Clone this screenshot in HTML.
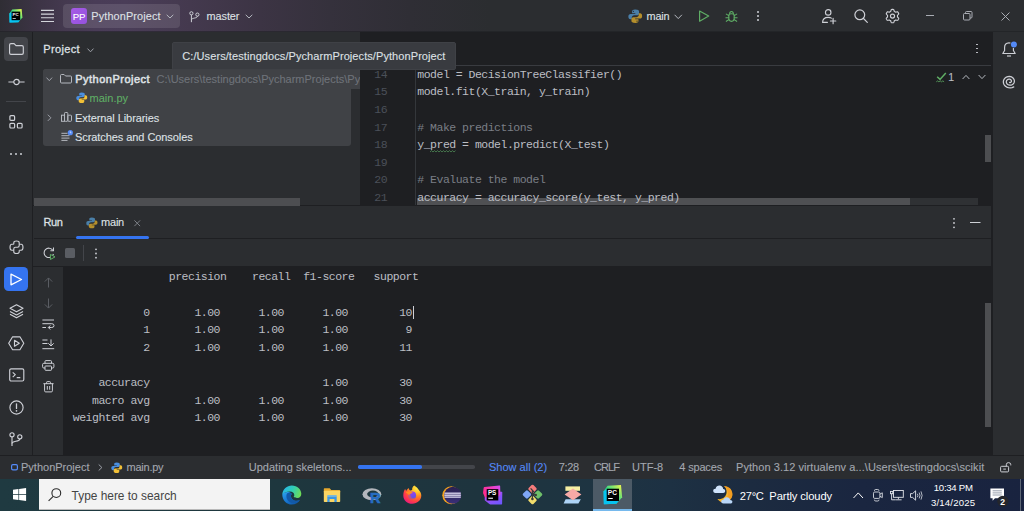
<!DOCTYPE html>
<html lang="en">
<head>
<meta charset="utf-8">
<title>PythonProject - main.py</title>
<style>
*{box-sizing:border-box;margin:0;padding:0}
html,body{width:1024px;height:511px;overflow:hidden;background:#1e1f22}
body{position:relative;font-family:"Liberation Sans",sans-serif;font-size:11px;color:#dfe1e5;-webkit-font-smoothing:antialiased}
.abs{position:absolute}
.t{position:absolute;white-space:pre;line-height:14px;height:14px;-webkit-text-stroke:.1px}
.mono{font-family:"Liberation Mono",monospace;font-size:11.5px;letter-spacing:-.501px;white-space:pre;position:absolute;line-height:14px;height:14px;color:#bcbec4}
svg{position:absolute;overflow:visible}
.med{-webkit-text-stroke:.27px currentColor}
.k{-webkit-text-stroke:0}
.ln{color:#4b5059}
.cm{color:#7a7e85}
/* regions */
#titlebar{left:0;top:0;width:1024px;height:32px;background:#2b2d30}
#titleglow{left:0;top:0;width:520px;height:31.5px;background:linear-gradient(90deg,#2f2d34 0px,#36313d 20px,#3d3446 40px,#44394f 64px,#493c57 95px,#4a3d58 125px,#44394e 190px,#3c3444 260px,#35313c 330px,#2f2e35 410px,#2b2d30 490px)}
#lstripe{left:0;top:32px;width:32.300px;height:424px;background:#2b2d30}
#lstripeb{left:32.300px;top:32px;width:.9px;height:424px;background:#1e1f22}
#rstripe{left:992.300px;top:32px;width:32px;height:424px;background:#2b2d30}
#rstripeb{left:991.500px;top:32px;width:.8px;height:424px;background:#1e1f22}
#proj{left:33.200px;top:32px;width:326.800px;height:173px;background:#2b2d30}
#editor{left:360px;top:32px;width:631.500px;height:173.200px;background:#1e1f22}
#runhdr{left:33.200px;top:205.500px;width:958.300px;height:34px;background:#2b2d30}
#runtool{left:33.200px;top:240px;width:958.300px;height:26px;background:#2b2d30}
#rungut{left:33.200px;top:266.500px;width:29.600px;height:189px;background:#2b2d30}
#console{left:62.800px;top:266.500px;width:928.700px;height:189px;background:#1e1f22}
#status{left:0;top:456px;width:1024px;height:23px;background:#2b2d30}
#taskbar{left:0;top:479px;width:1024px;height:32px;background:#1c2a36}
</style>
</head>
<body>
<!-- ===== base regions ===== -->
<div class="abs" id="titlebar"></div>
<div class="abs" id="titleglow"></div>
<div class="abs" id="lstripe"></div><div class="abs" id="lstripeb"></div>
<div class="abs" id="rstripe"></div><div class="abs" id="rstripeb"></div>
<div class="abs" id="proj"></div>
<div class="abs" id="editor"></div>
<div class="abs" id="runhdr"></div>
<div class="abs" id="runtool"></div>
<div class="abs" id="rungut"></div>
<div class="abs" id="console"></div>
<div class="abs" id="status"></div>
<div class="abs" id="taskbar"></div>
<!-- SECTION:TITLEBAR -->
<!-- ===== title bar ===== -->
<div class="abs" style="left:0;top:31px;width:1024px;height:1px;background:#1e1f22;opacity:.55"></div>
<!-- PyCharm logo -->
<svg style="left:9px;top:9px" width="14" height="14" viewBox="0 0 14 14">
  <defs><linearGradient id="pcg" x1="0" y1="1" x2="1" y2="0"><stop offset="0" stop-color="#07c3f2"/><stop offset=".45" stop-color="#21d789"/><stop offset="1" stop-color="#fcf84a"/></linearGradient></defs>
  <path d="M3.2 0.6 L12.6 0 L13.4 8.6 L9.4 13.2 L0.6 13.4 L0.4 4.4 Z" fill="url(#pcg)"/>
  <path d="M0.4 4.6 L0.6 13.4 L9.4 13.2 L11 11 L2.6 11 L2.6 3 Z" fill="#07c3f2"/>
  <rect x="2.6" y="2.6" width="8.6" height="8.6" fill="#000"/>
  <text x="3.5" y="6.9" font-family="Liberation Sans,sans-serif" font-weight="700" font-size="4.4" fill="#fff">PC</text>
  <rect x="3.6" y="9.1" width="3.2" height=".7" fill="#fff"/>
</svg>
<!-- hamburger -->
<svg style="left:41px;top:9px" width="13" height="14" viewBox="0 0 13 14"><path d="M0 1.350 H13 M0 5.050 H13 M0 8.750 H13 M0 12.450 H13" stroke="#d3d5db" stroke-width="1.150" fill="none"/></svg>
<!-- project chip -->
<div class="abs" style="left:62.5px;top:4px;width:117.5px;height:24px;border-radius:4px;background:rgba(255,255,255,.11)"></div>
<div class="abs" style="left:70.5px;top:8px;width:16.5px;height:16px;border-radius:3px;background:linear-gradient(135deg,#a65be6,#9552dd)"></div>
<div class="t" id="pp" style="left:72.700px;top:9.800px;font-size:9.6px;color:#fff;letter-spacing:-.2px">PP</div>
<div class="t" id="tproj" style="margin-top:-.5px;left:91.3px;top:9.5px;font-size:10.9px;color:#dfe1e5;letter-spacing:.12px">PythonProject</div>
<svg style="left:166px;top:13.5px" width="8" height="5" viewBox="0 0 8 5"><path d="M.7.8 L4 4 L7.3.8" fill="none" stroke="#b4b8bf" stroke-width="1"/></svg>
<!-- branch -->
<svg style="left:189px;top:10.5px" width="11" height="12" viewBox="0 0 11 12"><g fill="none" stroke="#ced0d6" stroke-width="1"><circle cx="2.4" cy="2.3" r="1.6"/><circle cx="8.4" cy="3.6" r="1.6"/><path d="M2.4 3.9 V11.2"/><path d="M8.4 5.2 C8.4 7.6 2.4 6.6 2.4 9"/></g></svg>
<div class="t" id="tmaster" style="margin-top:-.5px;left:206.6px;top:9.5px;font-size:10.9px;color:#dfe1e5;letter-spacing:-.08px">master</div>
<svg style="left:244.5px;top:13.5px" width="8" height="5" viewBox="0 0 8 5"><path d="M.7.8 L4 4 L7.3.8" fill="none" stroke="#b4b8bf" stroke-width="1"/></svg>
<!-- run config -->
<svg style="left:627.5px;top:8.8px" width="14.5" height="14.5" viewBox="0 0 16 16">
  <path d="M7.9 0.6c-3 0-3.4 1.3-3.4 2.2v1.9h3.6v.7H2.9C1.4 5.4.4 6.4.4 8.4s.9 3 2.2 3h1.6V9.500c0-1.400 1.200-2.500 2.600-2.500h3.400c1.100 0 2-.9 2-2V2.800c0-1.100-1-2.200-4.300-2.200z" fill="#4a7fa8"/>
  <path d="M8.100 15.400c3 0 3.400-1.300 3.400-2.200v-1.900H7.900v-.7h5.200c1.500 0 2.500-1 2.500-3s-.9-3-2.200-3h-1.600v1.900c0 1.400-1.200 2.500-2.600 2.500H5.800c-1.100 0-2 .9-2 2v2.200c0 1.100 1 2.200 4.300 2.200z" fill="#b58f2c"/>
  <circle cx="6" cy="2.500" r=".7" fill="#2b2d30"/><circle cx="10" cy="13.500" r=".7" fill="#2b2d30"/>
</svg>
<div class="t" id="tmain" style="margin-top:-.5px;left:646.6px;top:9.5px;font-size:10.9px;color:#dfe1e5;letter-spacing:-.25px">main</div>
<svg style="left:673.5px;top:14px" width="8.500" height="6" viewBox="0 0 8.500 6"><path d="M.6.8 L4.250 4.600 L7.900.8" fill="none" stroke="#b4b8bf" stroke-width="1"/></svg>
<svg style="left:698px;top:10px" width="12" height="12" viewBox="0 0 12 12"><path d="M1.600 1 L10.700 6.100 L1.600 11.200 Z" fill="none" stroke="#5fad65" stroke-width="1.200" stroke-linejoin="round"/></svg>
<svg style="left:724.5px;top:9.5px" width="13" height="13" viewBox="0 0 13 13"><g fill="none" stroke="#5fad65" stroke-width="1.100" stroke-linecap="round"><path d="M3.800 5.200 C3.800 3.200 9.200 3.200 9.200 5.200 V8.600 C9.200 12.300 3.800 12.300 3.800 8.600 Z"/><path d="M4.700 3.600 C4.700 .7 8.300 .7 8.300 3.600"/><path d="M3.800 5.600 L1.300 4.100 M3.800 7.700 H.9 M3.800 9.600 L1.300 11.300 M9.200 5.600 L11.700 4.100 M9.200 7.700 H12.100 M9.200 9.600 L11.700 11.300"/></g></svg>
<div class="abs" style="left:757.300px;top:10.5px;width:2.200px;height:2.200px;border-radius:1.100px;background:#ced0d6"></div>
<div class="abs" style="left:757.300px;top:14.9px;width:2.200px;height:2.200px;border-radius:1.100px;background:#ced0d6"></div>
<div class="abs" style="left:757.300px;top:19.3px;width:2.200px;height:2.200px;border-radius:1.100px;background:#ced0d6"></div>
<!-- right icons -->
<svg style="left:821px;top:8.500px" width="16" height="15" viewBox="0 0 16 15"><g fill="none" stroke="#ced0d6" stroke-width="1.150" stroke-linecap="round"><circle cx="7.200" cy="3.400" r="2.750"/><path d="M1.600 13.400 C1.600 10 4 8.300 7.200 8.300 C8.600 8.300 9.700 8.600 10.400 9.100 M1.600 13.400 H6.400"/><path d="M12.100 9.300 V14.700 M9.400 12 H14.800"/></g></svg>
<svg style="left:853.5px;top:9.300px" width="14" height="14" viewBox="0 0 14 14"><g fill="none" stroke="#ced0d6" stroke-width="1.200" stroke-linecap="round"><circle cx="5.800" cy="5.800" r="4.900"/><path d="M9.500 9.500 L13.300 13.300"/></g></svg>
<svg style="left:884.700px;top:9px" width="15" height="14" viewBox="0 0 15 14"><g fill="none" stroke="#ced0d6" stroke-width="1.150" stroke-linejoin="round"><path d="M12.50 7.10 L12.50 7.32 L12.48 7.54 L12.46 7.75 L12.55 7.99 L12.85 8.29 L13.15 8.61 L13.44 8.97 L13.68 9.35 L13.69 9.66 L13.57 9.93 L13.44 10.19 L13.30 10.45 L13.15 10.70 L12.99 10.94 L12.82 11.18 L12.53 11.32 L12.09 11.30 L11.64 11.24 L11.20 11.14 L10.80 11.03 L10.54 11.07 L10.37 11.20 L10.19 11.32 L10.00 11.43 L9.81 11.54 L9.61 11.63 L9.41 11.72 L9.25 11.92 L9.15 12.32 L9.01 12.75 L8.85 13.18 L8.64 13.57 L8.37 13.74 L8.08 13.77 L7.79 13.79 L7.50 13.80 L7.21 13.79 L6.92 13.77 L6.63 13.74 L6.36 13.57 L6.15 13.18 L5.99 12.75 L5.85 12.32 L5.75 11.92 L5.59 11.72 L5.39 11.63 L5.19 11.54 L5.00 11.43 L4.81 11.32 L4.63 11.20 L4.46 11.07 L4.20 11.03 L3.80 11.14 L3.36 11.24 L2.91 11.30 L2.47 11.32 L2.18 11.18 L2.01 10.94 L1.85 10.70 L1.70 10.45 L1.56 10.19 L1.43 9.93 L1.31 9.66 L1.32 9.35 L1.56 8.97 L1.85 8.61 L2.15 8.29 L2.45 7.99 L2.54 7.75 L2.52 7.54 L2.50 7.32 L2.50 7.10 L2.50 6.88 L2.52 6.66 L2.54 6.45 L2.45 6.21 L2.15 5.91 L1.85 5.59 L1.56 5.23 L1.32 4.85 L1.31 4.54 L1.43 4.27 L1.56 4.01 L1.70 3.75 L1.85 3.50 L2.01 3.26 L2.18 3.02 L2.47 2.88 L2.91 2.90 L3.36 2.96 L3.80 3.06 L4.20 3.17 L4.46 3.13 L4.63 3.00 L4.81 2.88 L5.00 2.77 L5.19 2.66 L5.39 2.57 L5.59 2.48 L5.75 2.28 L5.85 1.88 L5.99 1.45 L6.15 1.02 L6.36 0.63 L6.63 0.46 L6.92 0.43 L7.21 0.41 L7.50 0.40 L7.79 0.41 L8.08 0.43 L8.37 0.46 L8.64 0.63 L8.85 1.02 L9.01 1.45 L9.15 1.88 L9.25 2.28 L9.41 2.48 L9.61 2.57 L9.81 2.66 L10.00 2.77 L10.19 2.88 L10.37 3.00 L10.54 3.13 L10.80 3.17 L11.20 3.06 L11.64 2.96 L12.09 2.90 L12.53 2.88 L12.82 3.02 L12.99 3.26 L13.15 3.50 L13.30 3.75 L13.44 4.01 L13.57 4.27 L13.69 4.54 L13.68 4.85 L13.44 5.23 L13.15 5.59 L12.85 5.91 L12.55 6.21 L12.46 6.45 L12.48 6.66 L12.50 6.88 Z"/><circle cx="7.500" cy="7.100" r="2.050"/></g></svg>
<div class="abs" style="left:925.5px;top:14.800px;width:8.500px;height:1px;background:#a9acb3"></div>
<svg style="left:962.5px;top:11px" width="10" height="10" viewBox="0 0 10 10"><g fill="none" stroke="#a9acb3" stroke-width="1"><rect x=".5" y="2.500" width="6.500" height="6.500" rx="1"/><path d="M2.500 2.500 V1.500 Q2.500 .5 3.500 .5 H8 Q9 .5 9 1.500 V6 Q9 7 8 7 H7"/></g></svg>
<svg style="left:1000.5px;top:11.500px" width="9" height="9" viewBox="0 0 9 9"><path d="M.5.5 L8.500 8.500 M8.500.5 L.5 8.500" fill="none" stroke="#a9acb3" stroke-width="1"/></svg>
<!-- END:TITLEBAR -->
<!-- SECTION:LEFTSTRIPE -->
<!-- ===== left tool stripe ===== -->
<div class="abs" style="left:4px;top:37px;width:24px;height:24px;border-radius:4px;background:#43454a"></div>
<svg style="left:8.600px;top:43.100px" width="14.900" height="12" viewBox="0 0 15.500 12.500"><path d="M.6 2 Q.6 .6 2 .6 H5.300 L7.300 2.700 H13.500 Q14.900 2.700 14.900 4.100 V10.500 Q14.900 11.900 13.500 11.900 H2 Q.6 11.900 .6 10.500 Z" fill="none" stroke="#ced0d6" stroke-width="1.200" stroke-linejoin="round"/></svg>
<svg style="left:7.500px;top:78px" width="17" height="8" viewBox="0 0 17 8"><g fill="none" stroke="#ced0d6" stroke-width="1.200"><circle cx="8.500" cy="4" r="2.700"/><path d="M.4 4 H5.800 M11.200 4 H16.600"/></g></svg>
<div class="abs" style="left:6px;top:101px;width:20px;height:1px;background:#43454a"></div>
<svg style="left:9px;top:115px" width="14" height="14" viewBox="0 0 14 14"><g fill="none" stroke="#ced0d6" stroke-width="1.200"><rect x=".9" y=".7" width="4.700" height="4.700" rx="1"/><rect x=".9" y="8.300" width="4.700" height="4.700" rx="1"/><rect x="8.400" y="8.300" width="4.700" height="4.700" rx="1"/></g></svg>
<div class="abs" style="left:9.5px;top:153.100px;width:2.400px;height:2.400px;border-radius:1.200px;background:#ced0d6"></div>
<div class="abs" style="left:14.8px;top:153.100px;width:2.400px;height:2.400px;border-radius:1.200px;background:#ced0d6"></div>
<div class="abs" style="left:20.1px;top:153.100px;width:2.400px;height:2.400px;border-radius:1.200px;background:#ced0d6"></div>
<!-- python console -->
<svg style="left:8.700px;top:239.500px" width="15" height="14.500" viewBox="0 0 16 16"><g fill="none" stroke="#ced0d6" stroke-width="1.250" stroke-linejoin="round"><path d="M5 4.700 V3 C5 .4 11 .4 11 3 V6.200 C11 7.400 10.200 8 9.200 8 H6.800 C5.800 8 5 8.600 5 9.800 V13 C5 15.600 11 15.600 11 13 V11.300"/><path d="M5 4.700 H2.800 C.2 4.700 .2 11.300 2.800 11.300 H5 M11 11.300 H13.200 C15.800 11.300 15.800 4.700 13.200 4.700 H11"/></g></svg>
<!-- run (active) -->
<div class="abs" style="left:4px;top:266.500px;width:24px;height:24px;border-radius:4.500px;background:#3574f0"></div>
<svg style="left:10px;top:272.500px" width="12.500" height="13" viewBox="0 0 12.500 13"><path d="M1 1.200 L11.500 6.500 L1 11.800 Z" fill="none" stroke="#fff" stroke-width="1.300" stroke-linejoin="round"/></svg>
<!-- layers -->
<svg style="left:9px;top:303.500px" width="15" height="14.500" viewBox="0 0 15 14.500"><g fill="none" stroke="#ced0d6" stroke-width="1.150" stroke-linejoin="round"><path d="M7.500 .8 L14 4.300 L7.500 7.800 L1 4.300 Z"/><path d="M1 7.400 L7.500 10.900 L14 7.400"/><path d="M1 10.300 L7.500 13.800 L14 10.300"/></g></svg>
<!-- services -->
<svg style="left:8px;top:335.500px" width="16.500" height="14.500" viewBox="0 0 16.500 14.500"><g fill="none" stroke="#ced0d6" stroke-width="1.150" stroke-linejoin="round"><path d="M4.600 .8 H11.900 L15.800 7.200 L11.900 13.700 H4.600 L.7 7.200 Z"/><path d="M6.500 4.300 L11.300 7.200 L6.500 10.200 Z"/></g></svg>
<!-- terminal -->
<svg style="left:8.500px;top:368px" width="15.500" height="14" viewBox="0 0 15.500 14"><g fill="none" stroke="#ced0d6" stroke-width="1.150" stroke-linejoin="round"><rect x=".7" y=".8" width="14.100" height="12.200" rx="1.500"/><path d="M3.700 4.300 L6.300 6.700 L3.700 9.100 M7.700 9.600 H11.300"/></g></svg>
<!-- problems -->
<svg style="left:8.500px;top:399.500px" width="15" height="15" viewBox="0 0 15 15"><circle cx="7.500" cy="7.500" r="6.600" fill="none" stroke="#ced0d6" stroke-width="1.150"/><path d="M7.500 3.800 V8.400" stroke="#ced0d6" stroke-width="1.300" stroke-linecap="round"/><circle cx="7.500" cy="10.800" r=".85" fill="#ced0d6"/></svg>
<!-- git -->
<svg style="left:9px;top:432px" width="14" height="14.500" viewBox="0 0 14 14.500"><g fill="none" stroke="#ced0d6" stroke-width="1.150"><circle cx="3" cy="2.800" r="2.100"/><circle cx="10.800" cy="4.800" r="2.100"/><path d="M3 4.900 V14"/><path d="M10.800 6.900 C10.800 10.200 3 8.400 3 11.600"/></g></svg>
<!-- END:LEFTSTRIPE -->
<!-- SECTION:PROJECT -->
<!-- ===== project panel ===== -->
<div class="t med" id="hproj" style="left:43.3px;top:41.700px;font-size:11px;color:#dfe1e5;letter-spacing:.33px">Project</div>
<svg style="left:87px;top:47.500px" width="7" height="5" viewBox="0 0 7 5"><path d="M.5.6 L3.500 3.800 L6.500.6" fill="none" stroke="#9da0a8" stroke-width="1"/></svg>
<!-- tree highlight -->
<div class="abs" style="left:42.500px;top:69px;width:308px;height:77px;border-radius:3px;background:#404246"></div>
<div class="abs" style="left:42.500px;top:69px;width:317.500px;height:19.500px;border-radius:3px 0 0 0;background:#404246"></div>
<!-- row 1 -->
<svg style="left:46px;top:76.500px" width="7" height="5" viewBox="0 0 7 5"><path d="M.5.6 L3.300 3.700 L6.100.6" fill="none" stroke="#9da0a8" stroke-width="1"/></svg>
<svg style="left:60px;top:74.200px" width="12" height="9.500" viewBox="0 0 12 9.500"><path d="M.5 1.500 Q.5 .5 1.500 .5 H4.100 L5.600 2 H10.500 Q11.500 2 11.500 3 V8 Q11.500 9 10.500 9 H1.500 Q.5 9 .5 8 Z" fill="none" stroke="#b4b8bf" stroke-width="1"/></svg>
<div class="t" id="trproj" style="left:75.200px;top:72px;font-size:11px;color:#dfe1e5;letter-spacing:.5px;-webkit-text-stroke:.5px #dfe1e5">PythonProject</div>
<div class="abs" style="left:156px;top:70px;width:204px;height:18px;overflow:hidden"><div class="t" id="trpath" style="left:.6px;top:2px;font-size:11px;color:#6f737a">C:\Users\testingdocs\PycharmProjects\PythonProject</div></div>
<!-- row 2 -->
<svg style="left:75.500px;top:92.300px" width="11.500" height="11.500" viewBox="0 0 16 16">
  <path d="M7.900 0.600c-3 0-3.400 1.300-3.400 2.200v1.900h3.600v.7H2.900C1.400 5.400.4 6.400.4 8.400s.9 3 2.200 3h1.600V9.500c0-1.400 1.200-2.500 2.600-2.500h3.400c1.100 0 2-.9 2-2V2.800c0-1.100-1-2.200-4.300-2.200z" fill="#4a8fe0"/>
  <path d="M8.100 15.400c3 0 3.400-1.300 3.400-2.200v-1.900H7.900v-.7h5.200c1.500 0 2.500-1 2.500-3s-.9-3-2.200-3h-1.600v1.900c0 1.400-1.200 2.500-2.600 2.500H5.800c-1.100 0-2 .9-2 2v2.200c0 1.100 1 2.200 4.300 2.200z" fill="#f2c037"/>
</svg>
<div class="t" id="trmain" style="left:89.600px;top:91.200px;font-size:11px;color:#5fad65">main.py</div>
<!-- row 3 -->
<svg style="left:47px;top:114px" width="5" height="8" viewBox="0 0 5 8"><path d="M.8.700 L3.900 3.800 L.8 6.900" fill="none" stroke="#9da0a8" stroke-width="1"/></svg>
<svg style="left:60.500px;top:112.300px" width="11.500" height="10" viewBox="0 0 11.500 10"><g fill="none" stroke="#b4b8bf" stroke-width="1"><rect x=".5" y="3.200" width="3" height="6.100"/><rect x="3.500" y=".5" width="3.300" height="8.800" rx=".8"/><rect x="6.800" y="3.200" width="3.700" height="6.100" rx=".8"/></g></svg>
<div class="t" id="trext" style="left:75px;top:110.500px;font-size:11px;color:#dfe1e5;letter-spacing:-.08px">External Libraries</div>
<!-- row 4 -->
<svg style="left:60.500px;top:130px" width="12" height="11" viewBox="0 0 12 11"><g stroke="#b4b8bf" stroke-width="1" fill="none"><path d="M.4 3.300 H6.500 M.4 5.700 H8.500 M.4 8.100 H8.500 M.4 10.400 H6.500"/></g><circle cx="9.300" cy="2.700" r="2.600" fill="#548af7"/><path d="M9.300 1.300 V2.800 H10.400" stroke="#fff" stroke-width=".6" fill="none"/></svg>
<div class="t" id="trscr" style="left:75px;top:129.800px;font-size:11px;color:#dfe1e5;letter-spacing:-.07px">Scratches and Consoles</div>
<!-- h scrollbar -->
<div class="abs" style="left:34px;top:198px;width:266px;height:7.500px;background:#4d4e51"></div>
<!-- END:PROJECT -->
<!-- SECTION:EDITOR -->
<!-- ===== editor ===== -->
<div class="abs" style="left:360px;top:65px;width:631px;height:1px;background:#393b40"></div>
<div class="abs" style="left:415.100px;top:66px;width:.9px;height:139px;background:#34373b"></div>
<div class="abs" style="left:976px;top:43.700px;width:1.800px;height:1.800px;border-radius:1px;background:#ced0d6"></div>
<div class="abs" style="left:976px;top:47.600px;width:1.800px;height:1.800px;border-radius:1px;background:#ced0d6"></div>
<div class="abs" style="left:976px;top:51.500px;width:1.800px;height:1.800px;border-radius:1px;background:#ced0d6"></div>
<div class="abs" style="left:417px;top:198.300px;width:560.500px;height:6.900px;background:#2f3134"></div>
<div class="abs" style="left:417px;top:198.300px;width:493px;height:6.900px;background:#4f5053"></div>
<div class="mono ln" style="left:374.300px;top:67.7px">14</div>
<div class="mono ln" style="left:374.300px;top:85.3px">15</div>
<div class="mono ln" style="left:374.300px;top:102.9px">16</div>
<div class="mono ln" style="left:374.300px;top:120.5px">17</div>
<div class="mono ln" style="left:374.300px;top:138.1px">18</div>
<div class="mono ln" style="left:374.300px;top:155.7px">19</div>
<div class="mono ln" style="left:374.300px;top:173.3px">20</div>
<div class="mono ln" style="left:374.300px;top:190.9px">21</div>
<div class="mono" id="c14" style="left:417.300px;top:67.7px">model = DecisionTreeClassifier()</div>
<div class="mono" id="c15" style="left:417.300px;top:85.3px">model.fit(X_train, y_train)</div>
<div class="mono cm" id="c17" style="left:417.300px;top:120.5px"># Make predictions</div>
<div class="mono" id="c18" style="left:417.300px;top:138.1px">y_pred = model.predict(X_test)</div>
<div class="mono cm" id="c20" style="left:417.300px;top:173.3px"># Evaluate the model</div>
<div class="mono" id="c21" style="left:417.300px;top:190.9px">accuracy = accuracy_score(y_test, y_pred)</div>
<svg style="left:430.300px;top:149.700px" width="26" height="3" viewBox="0 0 26 3"><path d="M0 2 L1.500 .6 L3 2 L4.500 .6 L6 2 L7.500 .6 L9 2 L10.500 .6 L12 2 L13.500 .6 L15 2 L16.500 .6 L18 2 L19.500 .6 L21 2 L22.500 .6 L24 2 L25.500 .6" fill="none" stroke="#4f8a55" stroke-width=".8"/></svg>
<!-- inspections widget -->
<svg style="left:936px;top:72px" width="11" height="11" viewBox="0 0 11 11"><path d="M1.200 4.800 L4 7.400 L9.800 .9" fill="none" stroke="#5fad65" stroke-width="1.500"/><path d="M.3 9.800 L1.600 8.900 L2.900 9.800 L4.200 8.900 L5.500 9.800 L6.800 8.900 L8.100 9.800" fill="none" stroke="#5fad65" stroke-width=".8"/></svg>
<div class="t" style="left:948.300px;top:70.300px;font-size:10.500px;color:#bcbec4">1</div>
<svg style="left:962px;top:73.500px" width="8" height="6" viewBox="0 0 8 6"><path d="M.6 5 L4 1.400 L7.400 5" fill="none" stroke="#b4b8bf" stroke-width="1"/></svg>
<svg style="left:978px;top:73.800px" width="8" height="6" viewBox="0 0 8 6"><path d="M.6 1 L4 4.600 L7.400 1" fill="none" stroke="#b4b8bf" stroke-width="1"/></svg>
<!-- scrollbars -->
<div class="abs" style="left:984.500px;top:135px;width:6.500px;height:27px;background:#4d4e51"></div>
<!-- tooltip -->
<div class="abs" style="left:171.700px;top:42px;width:284.500px;height:28.300px;background:#393b40;border:1px solid #3f4146;border-radius:2px"></div>
<div class="t" id="ttip" style="left:182.300px;top:49.300px;font-size:11px;color:#dfe1e5;letter-spacing:.08px">C:/Users/testingdocs/PycharmProjects/PythonProject</div>
<!-- right stripe icons -->
<svg style="left:1001px;top:40.500px" width="16" height="17" viewBox="0 0 16 17"><g fill="none" stroke="#ced0d6" stroke-width="1.150" stroke-linejoin="round"><path d="M8 1.800 C4.800 1.800 3.600 4 3.600 6.500 V9.500 L1.800 12.500 H14.200 L12.400 9.500 V6.500 C12.400 4 11.200 1.800 8 1.800 Z"/><path d="M6 15 H10"/></g><circle cx="12.900" cy="3.400" r="3.700" fill="#2b2d30"/><circle cx="12.900" cy="3.400" r="3" fill="#548af7"/></svg>
<svg style="left:1001.500px;top:74px" width="15" height="15" viewBox="0 0 15 15"><path d="M7.58 8.45 L7.88 8.53 L8.23 8.53 L8.59 8.42 L8.93 8.21 L9.20 7.90 L9.39 7.51 L9.45 7.05 L9.37 6.57 L9.13 6.10 L8.74 5.69 L8.21 5.37 L7.58 5.18 L6.89 5.16 L6.18 5.31 L5.51 5.65 L4.95 6.15 L4.53 6.80 L4.31 7.56 L4.33 8.37 L4.58 9.18 L5.08 9.93 L5.80 10.54 L6.70 10.98 L7.73 11.18 L8.82 11.13 L9.88 10.81 L10.84 10.23 L11.62 9.42 L12.15 8.42 L12.38 7.30 L12.28 6.14 L11.83 5.01 L11.05 4.00 L9.99 3.20 L8.71 2.66 L7.28 2.45 L5.81 2.60 L4.40 3.10 L3.16 3.94 L2.19 5.07 L1.56 6.42 L1.33 7.90 L1.55 9.42 L2.20 10.86 L3.27 12.12 L4.68 13.09 L6.36 13.71 L8.18 13.90 L10.03 13.65 L11.78 12.95" fill="none" stroke="#ced0d6" stroke-width="1.250" stroke-linecap="round" stroke-linejoin="round"/></svg>
<!-- END:EDITOR -->
<!-- SECTION:RUN -->
<!-- ===== run tool window ===== -->
<div class="abs" style="left:34px;top:205.500px;width:957px;height:.7px;background:#2b2d30"></div>
<div class="abs" style="left:34px;top:237.700px;width:957px;height:1px;background:#1e1f22"></div>
<div class="abs" style="left:34px;top:265.500px;width:957px;height:1px;background:#1e1f22"></div>
<div class="t med" id="hrun" style="left:43.4px;top:215.200px;font-size:11px;color:#dfe1e5;letter-spacing:-.3px">Run</div>
<svg style="left:85.800px;top:216.700px" width="11.800" height="11.800" viewBox="0 0 16 16">
  <path d="M7.900 0.600c-3 0-3.400 1.300-3.400 2.200v1.900h3.600v.7H2.900C1.400 5.400.4 6.400.4 8.400s.9 3 2.200 3h1.600V9.500c0-1.400 1.200-2.500 2.600-2.500h3.400c1.100 0 2-.9 2-2V2.800c0-1.100-1-2.200-4.300-2.200z" fill="#4a7fa8"/>
  <path d="M8.100 15.400c3 0 3.400-1.300 3.400-2.200v-1.900H7.900v-.7h5.200c1.500 0 2.500-1 2.500-3s-.9-3-2.200-3h-1.600v1.900c0 1.400-1.200 2.500-2.600 2.500H5.800c-1.100 0-2 .9-2 2v2.200c0 1.100 1 2.200 4.300 2.200z" fill="#b58f2c"/>
</svg>
<div class="t" id="trun" style="left:101px;top:215.200px;font-size:11px;color:#dfe1e5;letter-spacing:-.2px">main</div>
<svg style="left:134.400px;top:220.100px" width="6.500" height="6.500" viewBox="0 0 6.500 6.500"><path d="M.4.4 L6.100 6.100 M6.100.4 L.4 6.100" fill="none" stroke="#868a91" stroke-width=".9"/></svg>
<div class="abs" style="left:76px;top:236.300px;width:73.300px;height:3px;border-radius:1.500px;background:#3574f0"></div>
<svg style="left:953.300px;top:216.500px" width="2" height="12" viewBox="0 0 2 12"><circle cx="1" cy="1.800" r=".9" fill="#ced0d6"/><circle cx="1" cy="6" r=".9" fill="#ced0d6"/><circle cx="1" cy="10.300" r=".9" fill="#ced0d6"/></svg>
<!-- toolbar -->
<svg style="left:43px;top:247px" width="13" height="13" viewBox="0 0 13 13"><g fill="none" stroke-linejoin="round"><path d="M9.800 3.300 A4.700 4.700 0 1 0 10.400 7" stroke="#ced0d6" stroke-width="1.050"/><path d="M10.500 .6 V3.700 H7.400" stroke="#ced0d6" stroke-width="1.050"/><path d="M7.400 7.400 L12 9.900 L7.400 12.500 Z" stroke="#5fad65" stroke-width="1" fill="#2b2d30"/></g></svg>
<div class="abs" style="left:65.300px;top:248.300px;width:10px;height:9.800px;border-radius:1.500px;background:#5a5d63"></div>
<div class="abs" style="left:83.300px;top:244.500px;width:1px;height:16px;background:#43454a"></div>
<svg style="left:95.200px;top:248px" width="2" height="11" viewBox="0 0 2 11"><circle cx="1" cy="1.300" r=".9" fill="#ced0d6"/><circle cx="1" cy="5.500" r=".9" fill="#ced0d6"/><circle cx="1" cy="9.700" r=".9" fill="#ced0d6"/></svg>
<!-- gutter icons -->
<svg style="left:43.500px;top:276.500px" width="9" height="11" viewBox="0 0 9 11"><path d="M4.500 10.500 V1 M.8 4.600 L4.500 .9 L8.200 4.600" fill="none" stroke="#5a5d63" stroke-width="1"/></svg>
<svg style="left:43.500px;top:297.500px" width="9" height="11" viewBox="0 0 9 11"><path d="M4.500 .5 V10 M.8 6.400 L4.500 10.100 L8.200 6.400" fill="none" stroke="#5a5d63" stroke-width="1"/></svg>
<svg style="left:42px;top:318.500px" width="12.500" height="11" viewBox="0 0 12.500 11"><path d="M.4 1 H12 M.4 4.700 H9.800 Q12 4.700 12 6.600 Q12 8.500 9.800 8.500 H6.500 M.4 8.500 H4 M8.300 6.500 L6.300 8.500 L8.300 10.500" fill="none" stroke="#ced0d6" stroke-width="1"/></svg>
<svg style="left:42px;top:338.500px" width="12.500" height="10.500" viewBox="0 0 12.500 10.500"><path d="M.4 1 H5.500 M.4 4.500 H5.500 M.4 9.700 H12.200 M9 .4 V6.800 M6.300 4.300 L9 7 L11.700 4.300" fill="none" stroke="#ced0d6" stroke-width="1"/></svg>
<svg style="left:42px;top:360px" width="12.500" height="11" viewBox="0 0 12.500 11"><g fill="none" stroke="#ced0d6" stroke-width="1"><path d="M3 3.300 V1.400 Q3 .6 3.800 .6 H8.700 Q9.500 .6 9.500 1.400 V3.300"/><path d="M3 8 H1.800 Q.6 8 .6 6.800 V4.500 Q.6 3.300 1.800 3.300 H10.700 Q11.900 3.300 11.900 4.500 V6.800 Q11.900 8 10.700 8 H9.500"/><rect x="3" y="6" width="6.500" height="4.300" rx=".6"/></g></svg>
<svg style="left:43px;top:380.500px" width="11" height="11.500" viewBox="0 0 11 11.500"><g fill="none" stroke="#ced0d6" stroke-width="1"><path d="M.4 2.700 H10.600 M3.600 2.700 V1.300 Q3.600 .6 4.300 .6 H6.700 Q7.400 .6 7.400 1.300 V2.700"/><path d="M1.600 2.700 V9.800 Q1.600 10.900 2.700 10.900 H8.300 Q9.400 10.900 9.400 9.800 V2.700"/><path d="M4.300 5 V8.700 M6.700 5 V8.700"/></g></svg>
<!-- console text -->
<div class="mono" id="r0" style="left:72.800px;top:270.3px">               precision    recall  f1-score   support</div>
<div class="mono" id="r2" style="left:72.800px;top:305.5px">           0       1.00      1.00      1.00        10</div>
<div class="mono" id="r3" style="left:72.800px;top:323.1px">           1       1.00      1.00      1.00         9</div>
<div class="mono" id="r4" style="left:72.800px;top:340.7px">           2       1.00      1.00      1.00        11</div>
<div class="mono" id="r6" style="left:72.800px;top:375.9px">    accuracy                           1.00        30</div>
<div class="mono" id="r7" style="left:72.800px;top:393.5px">   macro avg       1.00      1.00      1.00        30</div>
<div class="mono" id="r8" style="left:72.800px;top:411.1px">weighted avg       1.00      1.00      1.00        30</div>
<div class="abs" style="left:412.600px;top:305.500px;width:1px;height:13.500px;background:#ced0d6"></div>
<div class="abs" style="left:984.500px;top:303px;width:6.500px;height:123.500px;background:#4d4e51"></div>
<svg style="left:970px;top:222px" width="10.500" height="1" viewBox="0 0 10.500 1"><rect width="10.500" height="1" fill="#ced0d6"/></svg>
<!-- END:RUN -->
<!-- SECTION:STATUS -->
<!-- ===== status bar ===== -->
<div class="abs" style="left:0;top:455px;width:1024px;height:1px;background:#1e1f22"></div>
<svg style="left:10.500px;top:464px" width="7" height="6.500" viewBox="0 0 7 6.500"><rect x=".6" y=".6" width="5.800" height="5.300" rx="1.300" fill="none" stroke="#548af7" stroke-width="1.200"/></svg>
<div class="t" id="sproj" style="left:21px;top:459.800px;font-size:11px;color:#a3a7af">PythonProject</div>
<svg style="left:98.300px;top:463.500px" width="5" height="7" viewBox="0 0 5 7"><path d="M.7.500 L3.900 3.500 L.7 6.500" fill="none" stroke="#9da0a8" stroke-width="1"/></svg>
<svg style="left:111px;top:461.500px" width="11.500" height="11.500" viewBox="0 0 16 16">
  <path d="M7.900 0.600c-3 0-3.400 1.300-3.400 2.200v1.900h3.600v.7H2.900C1.400 5.400.4 6.400.4 8.400s.9 3 2.200 3h1.600V9.500c0-1.400 1.200-2.500 2.600-2.500h3.400c1.100 0 2-.9 2-2V2.800c0-1.100-1-2.200-4.300-2.200z" fill="#4a8fe0"/>
  <path d="M8.100 15.400c3 0 3.400-1.300 3.400-2.200v-1.900H7.900v-.7h5.200c1.500 0 2.500-1 2.500-3s-.9-3-2.200-3h-1.600v1.900c0 1.400-1.200 2.500-2.600 2.500H5.800c-1.100 0-2 .9-2 2v2.200c0 1.100 1 2.200 4.300 2.200z" fill="#f2c037"/>
</svg>
<div class="t" id="smain" style="left:126.6px;top:459.800px;font-size:11px;color:#a3a7af;letter-spacing:-.25px">main.py</div>
<div class="t" id="supd" style="left:248.800px;top:459.800px;font-size:11px;color:#a3a7af">Updating skeletons...</div>
<div class="abs" style="left:358px;top:465.300px;width:117px;height:3.500px;border-radius:1.750px;background:#43454a"></div>
<div class="abs" style="left:358px;top:465.300px;width:64.300px;height:3.500px;border-radius:1.750px;background:#3574f0"></div>
<div class="t" id="sshow" style="left:489px;top:459.800px;font-size:11px;color:#548af7">Show all (2)</div>
<div class="t" id="spos" style="left:558.8px;top:459.800px;font-size:11px;color:#a3a7af;letter-spacing:-.35px">7:28</div>
<div class="t" id="scrlf" style="left:594px;top:459.800px;font-size:11px;color:#a3a7af;letter-spacing:-.9px">CRLF</div>
<div class="t" id="sutf" style="left:632px;top:459.800px;font-size:11px;color:#a3a7af">UTF-8</div>
<div class="t" id="sspc" style="left:679.3px;top:459.800px;font-size:11px;color:#a3a7af;letter-spacing:-.17px">4 spaces</div>
<div class="t" id="spy" style="left:736px;top:459.800px;font-size:11px;color:#a3a7af;letter-spacing:.06px">Python 3.12 virtualenv a...\Users\testingdocs\scikit</div>
<svg style="left:999.500px;top:462px" width="12" height="10.500" viewBox="0 0 12 10.500"><g fill="none" stroke="#ced0d6" stroke-width="1"><rect x=".6" y="4.300" width="8" height="5.600" rx="1"/><path d="M6.300 4.300 V2.700 Q6.300 .6 8.500 .6 Q10.800 .6 10.800 2.700 V3.400"/><path d="M3.300 7.100 H5.900"/></g></svg>
<!-- END:STATUS -->
<!-- SECTION:TASKBAR -->
<!-- ===== windows taskbar ===== -->
<div class="abs" style="left:0;top:478.500px;width:1024px;height:32.500px;background:linear-gradient(90deg,#1f3a41 0px,#1e373e 270px,#1e343e 480px,#1e3442 600px,#1d3143 670px,#1c2b40 750px,#1a2640 860px,#19233f 1024px)"></div>
<!-- start -->
<svg style="left:12.700px;top:488.200px" width="13.100" height="13.100" viewBox="0 0 13.500 13.500"><path d="M0 1.900 L5.600 1.100 V6.400 H0 Z M6.300 1 L13.500 0 V6.400 H6.300 Z M0 7.100 H5.600 V12.400 L0 11.600 Z M6.300 7.100 H13.500 V13.500 L6.300 12.500 Z" fill="#fff"/></svg>
<!-- search box -->
<div class="abs" style="left:38.600px;top:479px;width:231.400px;height:31.400px;background:#f3f3f3;border-bottom:1px solid #b9b9b9"></div>
<svg style="left:48.100px;top:488px" width="13.500" height="13.500" viewBox="0 0 13.500 13.500"><g fill="none" stroke="#2b2b2b" stroke-width="1.100"><circle cx="8.300" cy="5.100" r="4.400"/><path d="M5.200 8.300 L.6 12.900"/></g></svg>
<div class="t k" id="ksearch" style="left:71.6px;top:489px;font-size:11.9px;line-height:15px;height:15px;color:#444">Type here to search</div>
<!-- edge -->
<svg style="left:282px;top:484.800px" width="19.500" height="20" viewBox="0 0 20 20">
  <defs><linearGradient id="eg1" x1="0" y1=".3" x2="1" y2=".6"><stop offset="0" stop-color="#29b4ea"/><stop offset=".5" stop-color="#2fcdb6"/><stop offset="1" stop-color="#6fdc55"/></linearGradient>
  <linearGradient id="eg2" x1=".1" y1=".1" x2=".7" y2="1"><stop offset="0" stop-color="#2a9bea"/><stop offset=".6" stop-color="#1673cf"/><stop offset="1" stop-color="#0f58ab"/></linearGradient></defs>
  <path d="M.3 9.400 C.3 15.300 4.700 19.800 10 19.800 C13.800 19.800 16.900 17.900 18.400 15.200 C15.600 16.700 11.600 16.200 9.800 13.300 C8.800 11.700 9 10 10 9 C8 6 2 6.500 .3 9.400 Z" fill="url(#eg2)"/>
  <path d="M4.800 9.300 C3.800 12.800 5.600 16.800 9.600 18.100 C12.900 19.100 16.600 17.900 18.400 15.200 C15.600 16.700 11.600 16.200 9.800 13.300 C8.800 11.700 9 10 10 9 C8.600 7.300 5.600 7.300 4.800 9.300 Z" fill="#1259a8"/>
  <path d="M.3 9.400 C.8 4 5 .2 10.100 .2 C15.700 .2 19.800 4.300 19.800 8.700 C19.800 11.300 18.200 13.100 15.800 13.100 C13.800 13.100 12 12.700 12 11.900 C12 11.300 12.600 11.100 12.600 9.900 C12.600 7.700 10.600 6.300 8.200 6.300 C4.800 6.300 1.700 7.400 .3 9.400 Z" fill="url(#eg1)"/>
</svg>
<!-- file explorer -->
<svg style="left:322.500px;top:487.500px" width="18" height="14.200" viewBox="0 0 18.500 15">
  <path d="M.6 1 Q.6 .3 1.300 .3 H6.800 L8.400 2.200 H17.200 Q17.900 2.200 17.900 2.900 V4.500 H.6 Z" fill="#e8a92d"/>
  <rect x=".6" y="2.900" width="17.300" height="11.800" rx=".8" fill="#fbd563"/>
  <path d="M4.300 14.700 V9 H14.200 V14.700 H11.800 V11.500 H6.700 V14.700 Z" fill="#3b96e4"/>
  <rect x="4.300" y="7.600" width="9.900" height="1.600" fill="#5fb2f2"/>
</svg>
<!-- R -->
<svg style="left:361.500px;top:486.500px" width="21" height="17" viewBox="0 0 21 17">
  <ellipse cx="9.900" cy="7.300" rx="9.400" ry="6" fill="#b4b7bd"/>
  <ellipse cx="10.900" cy="7.100" rx="5.800" ry="3.500" fill="#1e373e"/>
  <text x="7.900" y="15.500" font-family="Liberation Sans,sans-serif" font-weight="700" font-size="14.600" fill="#276dc3" stroke="#276dc3" stroke-width=".6">R</text>
</svg>
<!-- firefox -->
<svg style="left:402.500px;top:485px" width="18.600" height="19" viewBox="0 0 19 19">
  <defs><radialGradient id="ff1" cx=".78" cy=".12" r="1.050"><stop offset="0" stop-color="#fff14a"/><stop offset=".25" stop-color="#ffc42a"/><stop offset=".5" stop-color="#ff7a26"/><stop offset=".75" stop-color="#ff3a4a"/><stop offset="1" stop-color="#e8128a"/></radialGradient>
  <linearGradient id="ff2" x1=".3" y1="0" x2=".6" y2="1"><stop offset="0" stop-color="#a23fe6"/><stop offset="1" stop-color="#5456ea"/></linearGradient></defs>
  <path d="M11.600 .2 C14 1.800 15.400 3.400 16.200 5 C17.600 6.400 18.700 8.600 18.700 10.600 C18.700 15.400 14.600 18.900 9.500 18.900 C4.400 18.900 .3 15.400 .3 10.400 C.3 7.600 1.200 5 2.300 3.700 C2.300 4.700 2.800 5.500 3.500 5.700 C3.800 4.300 4.900 3.200 6.100 3 C6 4 6.600 5 7.600 5.400 C8.400 5.300 9 5.200 9.400 4.600 C9.100 3 9.900 1.200 11.600 .2 Z" fill="url(#ff1)"/>
  <circle cx="9.500" cy="10.400" r="3.900" fill="url(#ff2)"/>
  <path d="M2.600 7.300 C5 6 8.400 6.400 10.200 8 C8.200 8 6.700 9 6.500 10.900 C5.600 9.500 4.100 8.100 2.600 7.300 Z" fill="#ff8d20"/>
  <path d="M5.700 9.800 C5.400 12.600 7.200 14.600 9.700 14.700 C11.600 14.700 13 13.500 13.400 12 C12.400 13.200 10.400 13.500 9 12.700 C7.800 12 7.400 10.700 7.800 9.600 C7 9.300 6.200 9.400 5.700 9.800 Z" fill="#ff5a2e" opacity=".55"/>
</svg>
<!-- eclipse -->
<svg style="left:441.900px;top:485.500px" width="19" height="18.500" viewBox="0 0 19 18.500">
  <defs><linearGradient id="ecg" x1="0" y1="0" x2="0" y2="1"><stop offset="0" stop-color="#2a2050"/><stop offset="1" stop-color="#3a2f78"/></linearGradient></defs>
  <circle cx="9.200" cy="9.250" r="8.900" fill="#f5a21f"/>
  <circle cx="10.700" cy="9.250" r="8.600" fill="url(#ecg)"/>
  <rect x="2.500" y="6.500" width="16.300" height="1.450" fill="#cdc7e4"/>
  <rect x="2.300" y="8.450" width="16.600" height="1.450" fill="#d9d4ec"/>
  <rect x="2.500" y="10.400" width="16.300" height="1.450" fill="#cdc7e4"/>
</svg>
<!-- phpstorm -->
<svg style="left:482.500px;top:485px" width="19.500" height="20" viewBox="0 0 20 20">
  <defs><linearGradient id="psg" x1="0" y1=".4" x2="1" y2="0"><stop offset="0" stop-color="#ff2d90"/><stop offset=".55" stop-color="#ee3fc4"/><stop offset="1" stop-color="#cf4ef6"/></linearGradient>
  <linearGradient id="psg2" x1="0" y1="0" x2=".8" y2="1"><stop offset="0" stop-color="#c24af3"/><stop offset="1" stop-color="#6d57ff"/></linearGradient></defs>
  <path d="M1.800 6.600 L19.200 6.600 Q19.800 6.600 19.800 7.200 L19.600 19 Q19.600 19.700 18.900 19.700 L7.600 19.800 Q7 19.800 6.500 19.300 L1.800 15.400 Z" fill="url(#psg2)"/>
  <path d="M1.500 1.800 L16.800 .2 Q17.600 .1 17.600 .9 L17.800 9.400 L15 12.400 H2 L.2 8.400 Q0 7.800 .1 7.200 L.7 2.600 Q.8 1.900 1.500 1.800 Z" fill="url(#psg)"/>
  <rect x="3.800" y="4" width="11.900" height="11.600" fill="#000"/>
  <text x="5" y="9.900" font-family="Liberation Sans,sans-serif" font-weight="700" font-size="6.500" fill="#fff">PS</text>
  <rect x="5.400" y="12.700" width="4.800" height="1.300" fill="#d8d8d8"/>
</svg>
<!-- tb-git -->
<svg style="left:522px;top:484.300px" width="21" height="21" viewBox="0 0 21 21">
  <g transform="rotate(45 10.500 10.500)"><rect x="3.200" y="3.200" width="6.700" height="6.700" rx="1.300" fill="#f47b7b"/><rect x="11.100" y="3.200" width="6.700" height="6.700" rx="1.300" fill="#6fc06a"/><rect x="3.200" y="11.100" width="6.700" height="6.700" rx="1.300" fill="#7fa7f5"/><rect x="11.100" y="11.100" width="6.700" height="6.700" rx="1.300" fill="#f2dc6b"/></g>
  <path d="M8.600 4.400 L12 8 M10.400 6.400 V15 M10.400 9.200 L13.600 10.900" stroke="#3a3a3a" stroke-width="1.200" fill="none"/><circle cx="10.400" cy="15" r="1.300" fill="#3a3a3a"/><circle cx="13.700" cy="11" r="1.300" fill="#3a3a3a"/>
</svg>
<!-- stack -->
<svg style="left:563.500px;top:486px" width="18" height="18" viewBox="0 0 18 18">
  <rect x="1.400" y=".4" width="14.600" height="4.400" fill="#f5efa3"/>
  <path d="M1.600 13.200 H16.800 L14.400 17.600 H-.4 Z" fill="#aed4f7"/>
  <path d="M9 2.600 L17.400 8.400 L9 14.200 L.6 8.400 Z" fill="#f6a9a6"/>
</svg>
<!-- pycharm active -->
<div class="abs" style="left:593px;top:478.500px;width:39px;height:32.500px;background:#4c5a66"></div>
<div class="abs" style="left:593px;top:508.500px;width:39px;height:2.500px;background:#76b9ed"></div>
<svg style="left:602.500px;top:485px" width="20" height="20" viewBox="0 0 14 14">
  <path d="M3.200 0.600 L12.600 0 L13.400 8.600 L9.400 13.200 L0.600 13.400 L0.400 4.400 Z" fill="url(#pcg)"/>
  <path d="M0.400 4.600 L0.600 13.400 L9.400 13.200 L11 11 L2.600 11 L2.600 3 Z" fill="#07c3f2"/>
  <rect x="2.600" y="2.600" width="8.600" height="8.600" fill="#000"/>
  <text x="3.400" y="7" font-family="Liberation Sans,sans-serif" font-weight="700" font-size="4.600" fill="#fff">PC</text>
  <rect x="3.600" y="9.100" width="3.200" height=".7" fill="#fff"/>
</svg>
<!-- weather -->
<svg style="left:713px;top:485px" width="21" height="19" viewBox="0 0 21 19">
  <path d="M11 1 C15.600 1 19.400 4.600 19.400 9.200 C19.400 13.800 15.600 17.400 11 17.400 C8.200 17.400 5.800 16 4.400 14 C9.600 15 13.600 11.200 13.600 7 C13.600 4.600 12.600 2.400 11 1 Z" fill="#f7b528"/>
  <path d="M11 1 C13 2.600 15.400 5.600 15 9.600 C14.600 13.400 11 16.400 6.200 15.800 C7.600 17 9.200 17.400 11 17.400 C15.600 17.400 19.400 13.800 19.400 9.200 C19.400 4.600 15.600 1 11 1 Z" fill="#f08a1c" opacity=".55"/>
  <path d="M2.400 8 C.8 8 .2 6.800 .2 5.800 C.2 4.600 1.200 3.600 2.600 3.800 C3 1.800 4.600 .6 6.400 .6 C8.400 .6 10 2 10.200 4 C11.400 4 12.200 4.800 12.200 6 C12.200 7.200 11.400 8 10.200 8 Z" fill="#cfe3fb"/>
  <path d="M10.400 18.600 C9 18.600 8.200 17.600 8.200 16.600 C8.200 15.400 9.200 14.600 10.400 14.800 C10.800 13.200 12.200 12.200 13.800 12.200 C15.600 12.200 17 13.400 17.200 15 C18.400 15 19.400 15.800 19.400 16.800 C19.400 17.800 18.600 18.600 17.400 18.600 Z" fill="#b9d6f7"/>
</svg>
<div class="t k" id="ktemp" style="left:739.8px;top:488.600px;font-size:11.2px;line-height:15px;height:15px;color:#fff;letter-spacing:-.3px">27°C</div>
<div class="t k" id="kwx" style="left:769.300px;top:488.600px;font-size:11.2px;line-height:15px;height:15px;color:#fff;letter-spacing:-.1px">Partly cloudy</div>
<svg style="left:853px;top:491.500px" width="10.500" height="6.500" viewBox="0 0 10.500 6.500"><path d="M.5 6 L5.250 .9 L10 6" fill="none" stroke="#fff" stroke-width="1"/></svg>
<svg style="left:873px;top:488.500px" width="10" height="12.500" viewBox="0 0 10 12.500"><g fill="none" stroke="#d8dbe2" stroke-width=".9"><rect x=".5" y="3" width="6.400" height="6.400" rx="1.200"/><path d="M6.900 5.200 L9.300 3.800 V8.600 L6.900 7.200"/><path d="M1.400 1.800 Q1.400 .5 2.700 .5 H4.700 Q6 .5 6 1.800 M1.400 10.700 Q1.400 12 2.700 12 H4.700 Q6 12 6 10.700"/></g></svg>
<svg style="left:890px;top:489.500px" width="14" height="11" viewBox="0 0 14 11"><g fill="none" stroke="#e4e6ec" stroke-width=".9"><rect x="3.500" y=".5" width="9.800" height="6.800"/><path d="M8.400 7.300 V9.200 M5.200 9.800 H11.600"/><rect x=".5" y="1.400" width="2.300" height="2.300" fill="#1a2640"/><path d="M1.600 3.700 V9.800 H5"/></g></svg>
<svg style="left:909.500px;top:489.500px" width="13" height="11" viewBox="0 0 13 11"><g fill="none" stroke="#e4e6ec" stroke-width=".9"><path d="M.5 3.600 H2.600 L5.600 .8 V10.200 L2.600 7.400 H.5 Z"/><path d="M7.400 3.800 Q8.400 5.500 7.400 7.200 M9.200 2.600 Q10.800 5.500 9.200 8.400 M11 1.400 Q13.200 5.500 11 9.600" opacity=".85"/></g></svg>
<div class="t k" id="ktime" style="left:933.8px;top:482.200px;font-size:9.600px;line-height:12px;height:12px;color:#fff;letter-spacing:-.28px">10:34 PM</div>
<div class="t k" id="kdate" style="left:931px;top:497px;font-size:9.600px;line-height:12px;height:12px;color:#fff;letter-spacing:.17px">3/14/2025</div>
<svg style="left:990px;top:488px" width="19" height="19" viewBox="0 0 19 19">
  <path d="M.4 .4 H14 V10.200 H5 L2.600 12.800 V10.200 H.4 Z" fill="#fff"/>
  <path d="M2.600 2.800 H11.800 M2.600 4.900 H11.800 M2.600 7 H11.800" stroke="#8b93a3" stroke-width=".9"/>
  <circle cx="12.800" cy="13.300" r="5.600" fill="#24262c"/>
  <text x="10.300" y="16.600" font-family="Liberation Sans,sans-serif" font-weight="700" font-size="8.600" fill="#fff">2</text>
</svg>
<div class="abs" style="left:1020px;top:479px;width:1px;height:32px;background:#5d6676"></div>
<!-- END:TASKBAR -->
</body>
</html>
